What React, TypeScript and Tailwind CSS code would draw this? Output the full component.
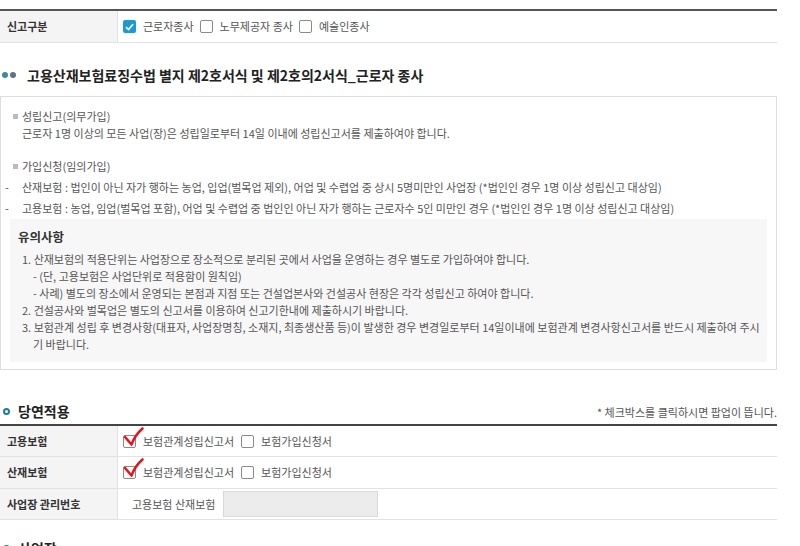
import React from 'react';

const font = "font-['Noto_Sans_CJK_KR','Noto_Sans',sans-serif]";

function BlueCheck() {
  return (
    <span className="w-[13px] h-[13px] rounded-[2px] bg-[#1c9ad6] flex items-center justify-center shrink-0">
      <svg width="9" height="8" viewBox="0 0 9 8">
        <path d="M1 4.2 L3.5 6.5 L8 1.3" fill="none" stroke="#fff" strokeWidth="1.7" />
      </svg>
    </span>
  );
}

function Box({ red, className = '' }: { red?: boolean; className?: string }) {
  return (
    <span className={`relative block w-[13px] h-[13px] rounded-[2px] border border-[#8a8a8a] bg-white shrink-0 ${className}`}>
      {red && (
        <svg className="absolute left-[-2px] top-[-10px] overflow-visible" width="22" height="22" viewBox="0 0 22 22">
          <path d="M3 11 Q6 14.5 9.5 18.5 Q13 9 20.5 2.5" fill="none" stroke="#e8141c" strokeWidth="2.6" strokeLinecap="round" strokeLinejoin="round" />
        </svg>
      )}
    </span>
  );
}

function Row({ label, h = 'h-[32px]', children }: { label: string; h?: string; children: React.ReactNode }) {
  return (
    <div className={`flex ${h} border-b border-[#e2e2e2]`}>
      <div className="w-[118px] bg-[#f4f4f4] border-r border-[#e2e2e2] pl-[7px] flex items-center font-bold text-[11px] text-[#333]">
        {label}
      </div>
      <div className="flex-1 flex items-center">{children}</div>
    </div>
  );
}

export default function App() {
  return (
    <div className={`w-[777px] pt-[9px] bg-white text-[11px] text-[#555] ${font}`}>
      <div className="border-t-2 border-[#555]">
        <Row label="신고구분">
          <div className="flex items-center pl-[5px] text-[#555]">
            <BlueCheck />
            <span className="ml-[7px]">근로자종사</span>
            <Box className="ml-[6px]" />
            <span className="ml-[7px]">노무제공자 종사</span>
            <Box className="ml-[6px]" />
            <span className="ml-[7px]">예술인종사</span>
          </div>
        </Row>
      </div>

      <div className="mt-[22px] h-[20px] flex items-center">
        <span className="ml-[2px] w-[6px] h-[6px] rounded-full bg-[#3a8b9c]" />
        <span className="ml-[2px] w-[6px] h-[6px] rounded-full bg-[#5f7282]" />
        <h2 className="ml-[11px] text-[14px] font-bold text-[#222]">
          고용산재보험료징수법 별지 제2호서식 및 제2호의2서식_근로자 종사
        </h2>
      </div>

      <div className="mt-[11px] border border-[#dedede] pt-[11px] pb-[7px] leading-[17px]">
        <div className="flex items-center">
          <span className="ml-[12px] w-[5px] h-[5px] bg-[#bbb]" />
          <span className="ml-[4px]">성립신고(의무가입)</span>
        </div>
        <div className="pl-[21px]">근로자 1명 이상의 모든 사업(장)은 성립일로부터 14일 이내에 성립신고서를 제출하여야 합니다.</div>
        <div className="flex items-center mt-[16px]">
          <span className="ml-[12px] w-[5px] h-[5px] bg-[#bbb]" />
          <span className="ml-[4px]">가입신청(임의가입)</span>
        </div>
        <div className="flex mt-[2px] leading-[21px]">
          <span className="w-[21px] pl-[4px]">-</span>
          <span>산재보험 : 법인이 아닌 자가 행하는 농업, 입업(벌목업 제외), 어업 및 수렵업 중 상시 5명미만인 사업장 (*법인인 경우 1명 이상 성립신고 대상임)</span>
        </div>
        <div className="flex leading-[21px]">
          <span className="w-[21px] pl-[4px]">-</span>
          <span>고용보험 : 농업, 임업(벌목업 포함), 어업 및 수렵업 중 법인인 아닌 자가 행하는 근로자수 5인 미만인 경우 (*법인인 경우 1명 이상 성립신고 대상임)</span>
        </div>

        <div className="mx-[9px] bg-[#f7f7f7] pt-[9px] pb-[9px] whitespace-nowrap">
          <h3 className="pl-[8px] text-[12.5px] leading-[18px] font-bold text-[#333]">유의사항</h3>
          <div className="mt-[5px] pl-[12px]">
            <div>1. 산재보험의 적용단위는 사업장으로 장소적으로 분리된 곳에서 사업을 운영하는 경우 별도로 가입하여야 합니다.</div>
            <div className="pl-[11px]">- (단, 고용보험은 사업단위로 적용함이 원칙임)</div>
            <div className="pl-[11px]">- 사례) 별도의 장소에서 운영되는 본점과 지점 또는 건설업본사와 건설공사 현장은 각각 성립신고 하여야 합니다.</div>
            <div>2. 건설공사와 벌목업은 별도의 신고서를 이용하여 신고기한내에 제출하시기 바랍니다.</div>
            <div>3. 보험관계 성립 후 변경사항(대표자, 사업장명칭, 소재지, 최종생산품 등)이 발생한 경우 변경일로부터 14일이내에 보험관계 변경사항신고서를 반드시 제출하여 주시</div>
            <div className="pl-[11px]">기 바랍니다.</div>
          </div>
        </div>
      </div>

      <div className="mt-[31px] h-[20px] flex items-center justify-between">
        <div className="flex items-center">
          <span className="ml-[3px] w-[7px] h-[7px] rounded-full border-2 border-[#1f7d9b]" />
          <h2 className="ml-[8px] text-[14px] font-bold text-[#222]">당연적용</h2>
        </div>
        <span className="text-[#555] pt-[2px]">* 체크박스를 클릭하시면 팝업이 뜹니다.</span>
      </div>

      <div className="mt-[3px] border-t-2 border-[#444]">
        <Row label="고용보험" h="h-[31px]">
          <div className="flex items-center pl-[5px]">
            <Box red />
            <span className="ml-[7px]">보험관계성립신고서</span>
            <Box className="ml-[7px]" />
            <span className="ml-[7px]">보험가입신청서</span>
          </div>
        </Row>
        <Row label="산재보험">
          <div className="flex items-center pl-[5px]">
            <Box red />
            <span className="ml-[7px]">보험관계성립신고서</span>
            <Box className="ml-[7px]" />
            <span className="ml-[7px]">보험가입신청서</span>
          </div>
        </Row>
        <Row label="사업장 관리번호" h="h-[31px]">
          <div className="flex items-center pl-[14px]">
            <span>고용보험 산재보험</span>
            <div className="ml-[8px] w-[155px] h-[26px] bg-[#ececec] border border-[#d8d8d8]" />
          </div>
        </Row>
      </div>

      <div className="mt-[18px] h-[20px] flex items-center">
        <span className="ml-[3px] w-[7px] h-[7px] rounded-full border-2 border-[#1f7d9b]" />
        <h2 className="ml-[8px] text-[14px] font-bold text-[#222]">사업장</h2>
      </div>
      <div className="h-[40px]" />
    </div>
  );
}
